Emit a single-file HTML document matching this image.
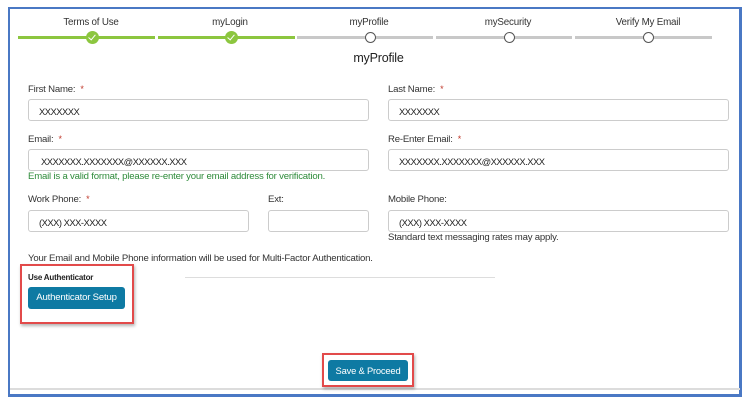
<!DOCTYPE html>
<html><head><meta charset="utf-8"><style>
*{box-sizing:border-box;margin:0;padding:0}
body{width:750px;height:403px;background:#fff;position:relative;overflow:hidden;font-family:"Liberation Sans",Calibri,sans-serif;color:#333}
.a{position:absolute}
.frame{left:8px;top:7px;width:734px;height:390px;border:2px solid #4a78c4;border-right-width:3px;border-bottom-width:3px}
.seg{position:absolute;height:3px;top:36px}
.g{background:#8cc63f}.gr{background:#c8c8c8}
.lbl{position:absolute;font-size:9.8px;letter-spacing:-.2px;color:#333;white-space:nowrap;transform:translateX(-50%)}
.chk{position:absolute;top:31px;width:13px;height:13px;border-radius:50%;background:#8cc63f;margin-left:-6.5px}
.chk:after{content:"";position:absolute;left:4px;top:2px;width:3px;height:6px;border:solid #fff;border-width:0 1.5px 1.5px 0;transform:rotate(40deg)}
.circ{position:absolute;top:32px;width:11px;height:11px;border-radius:50%;background:#fff;border:1.5px solid #555;margin-left:-5.5px}
.fl{position:absolute;font-size:9.6px;letter-spacing:-.2px;color:#333;white-space:nowrap}
.fl b{color:#c0392b;font-weight:normal;margin-left:5px;font-size:9px}
.in{position:absolute;height:22px;border:1px solid #ccc;border-radius:3px;font-size:9.4px;padding:6px 0 0 10px;color:#222;letter-spacing:-.5px}
.btn{position:absolute;background:#0e7aa3;color:#fff;border-radius:3px;font-size:9.6px;letter-spacing:-.2px;text-align:center}
.red{position:absolute;border:2px solid #e24a4a;box-shadow:1px 2px 3px rgba(0,0,0,.3)}
</style></head><body>
<div class="a frame"></div>
<div class="a" style="left:10px;top:388px;width:730px;height:2px;background:#dcdcdc"></div>
<div class="seg g" style="left:18px;width:137px"></div>
<div class="seg g" style="left:158px;width:137px"></div>
<div class="seg gr" style="left:297px;width:136px"></div>
<div class="seg gr" style="left:436px;width:136px"></div>
<div class="seg gr" style="left:575px;width:137px"></div>
<div class="lbl" style="left:91px;top:17px">Terms of Use</div>
<div class="lbl" style="left:230px;top:17px">myLogin</div>
<div class="lbl" style="left:369px;top:17px">myProfile</div>
<div class="lbl" style="left:508px;top:17px">mySecurity</div>
<div class="lbl" style="left:648px;top:17px">Verify My Email</div>
<div class="chk" style="left:92px"></div>
<div class="chk" style="left:231px"></div>
<div class="circ" style="left:370px"></div>
<div class="circ" style="left:509px"></div>
<div class="circ" style="left:648px"></div>
<div class="a" style="left:0;width:757px;text-align:center;top:51px;font-size:12.5px;letter-spacing:-.2px;color:#222">myProfile</div>

<div class="fl" style="left:28px;top:84px">First Name:<b>*</b></div>
<div class="in" style="left:28px;top:99px;width:341px">XXXXXXX</div>
<div class="fl" style="left:388px;top:84px">Last Name:<b>*</b></div>
<div class="in" style="left:388px;top:99px;width:341px">XXXXXXX</div>

<div class="fl" style="left:28px;top:134px">Email:<b>*</b></div>
<div class="in" style="left:28px;top:149px;width:341px;padding-left:12px">XXXXXXX.XXXXXXX@XXXXXX.XXX</div>
<div class="fl" style="left:28px;top:171px;color:#2e8b3a">Email is a valid format, please re-enter your email address for verification.</div>
<div class="fl" style="left:388px;top:134px">Re-Enter Email:<b>*</b></div>
<div class="in" style="left:388px;top:149px;width:341px">XXXXXXX.XXXXXXX@XXXXXX.XXX</div>

<div class="fl" style="left:28px;top:194px">Work Phone:<b>*</b></div>
<div class="in" style="left:28px;top:210px;width:221px">(XXX) XXX-XXXX</div>
<div class="fl" style="left:268px;top:194px">Ext:</div>
<div class="in" style="left:268px;top:210px;width:101px"></div>
<div class="fl" style="left:388px;top:194px">Mobile Phone:</div>
<div class="in" style="left:388px;top:210px;width:341px">(XXX) XXX-XXXX</div>
<div class="fl" style="left:388px;top:232px">Standard text messaging rates may apply.</div>

<div class="fl" style="left:28px;top:253px">Your Email and Mobile Phone information will be used for Multi-Factor Authentication.</div>
<div class="a" style="left:185px;top:277px;width:310px;height:1px;background:#ddd"></div>
<div class="red" style="left:20px;top:264px;width:114px;height:60px"></div>
<div class="a" style="left:28px;top:273px;font-size:8px;font-weight:bold;color:#222;letter-spacing:-.2px">Use Authenticator</div>
<div class="btn" style="left:28px;top:287px;width:97px;height:22px;line-height:22px">Authenticator Setup</div>
<div class="red" style="left:322px;top:353px;width:92px;height:34px"></div>
<div class="btn" style="left:328px;top:360px;width:80px;height:21px;line-height:21px;font-size:9.4px">Save &amp; Proceed</div>
</body></html>
